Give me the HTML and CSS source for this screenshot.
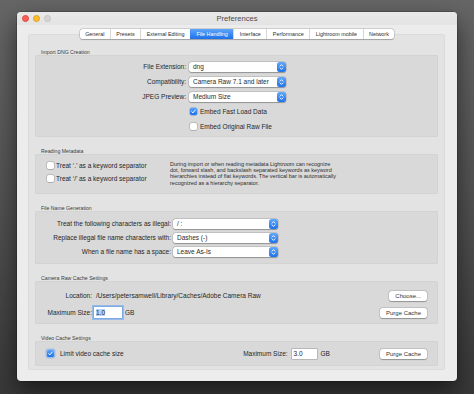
FILE: index.html
```html
<!DOCTYPE html>
<html lang="en">

<head>
    <meta charset="UTF-8">
    <meta name="viewport" content="width=device-width, initial-scale=1.0">
    <title>Preferences</title>
    <link rel="stylesheet" href="styles.css">
</head>

<body>
    <svg class="symbols" width="0" height="0">
        <symbol id="updown" viewBox="0 0 8 10">
            <path d="M2.6 4.1 L4 2.6 L5.4 4.1 M2.6 5.9 L4 7.4 L5.4 5.9" fill="none" stroke="#fff" stroke-width="0.9" stroke-linecap="round" stroke-linejoin="round"/>
        </symbol>
        <symbol id="tick" viewBox="0 0 8 8">
            <path d="M2 4.2 L3.3 5.6 L6 2.3" fill="none" stroke="#fff" stroke-width="1.1" stroke-linecap="round" stroke-linejoin="round"/>
        </symbol>
    </svg>

    <div class="window">
        <div class="titlebar">
            <div class="lights">
                <span class="light close"></span>
                <span class="light min"></span>
                <span class="light zoom"></span>
            </div>
            <div class="title">Preferences</div>
        </div>

        <div class="tabs">
            <span class="tab">General</span>
            <span class="tab">Presets</span>
            <span class="tab">External Editing</span>
            <span class="tab active">File Handling</span>
            <span class="tab">Interface</span>
            <span class="tab">Performance</span>
            <span class="tab">Lightroom mobile</span>
            <span class="tab">Network</span>
        </div>

        <div class="panel">
            <div class="group">
                <div class="group-title">Import DNG Creation</div>
                <div class="box dng">
                    <span class="field-label">File Extension:</span>
                    <div class="popup">dng<span class="stepper"><svg><use href="#updown"/></svg></span></div>
                    <span class="field-label">Compatibility:</span>
                    <div class="popup">Camera Raw 7.1 and later<span class="stepper"><svg><use href="#updown"/></svg></span></div>
                    <span class="field-label">JPEG Preview:</span>
                    <div class="popup">Medium Size<span class="stepper"><svg><use href="#updown"/></svg></span></div>
                    <div class="check-row in-grid"><span class="check on"><svg><use href="#tick"/></svg></span>Embed Fast Load Data</div>
                    <div class="check-row in-grid"><span class="check"></span>Embed Original Raw File</div>
                </div>
            </div>

            <div class="group">
                <div class="group-title">Reading Metadata</div>
                <div class="box metadata">
                    <div class="meta-checks">
                        <div class="check-row"><span class="check"></span>Treat ‘.’ as a keyword separator</div>
                        <div class="check-row"><span class="check"></span>Treat ‘/’ as a keyword separator</div>
                    </div>
                    <p class="meta-note">During import or when reading metadata Lightroom can recognize<br>dot, forward slash, and backslash separated keywords as keyword<br>hierarchies instead of flat keywords. The vertical bar is automatically<br>recognized as a hierarchy separator.</p>
                </div>
            </div>

            <div class="group">
                <div class="group-title">File Name Generation</div>
                <div class="box naming">
                    <span class="field-label">Treat the following characters as illegal:</span>
                    <div class="popup">/ :<span class="stepper"><svg><use href="#updown"/></svg></span></div>
                    <span class="field-label">Replace illegal file name characters with:</span>
                    <div class="popup">Dashes (-)<span class="stepper"><svg><use href="#updown"/></svg></span></div>
                    <span class="field-label">When a file name has a space:</span>
                    <div class="popup">Leave As-Is<span class="stepper"><svg><use href="#updown"/></svg></span></div>
                </div>
            </div>

            <div class="group">
                <div class="group-title">Camera Raw Cache Settings</div>
                <div class="box raw-cache">
                    <span class="field-label">Location:</span>
                    <span class="path">/Users/petersamwell/Library/Caches/Adobe Camera Raw</span>
                    <button class="btn">Choose...</button>
                    <span class="field-label">Maximum Size:</span>
                    <div class="size">
                        <span class="input focused"><span class="selected">1.0</span></span>
                        <span class="unit">GB</span>
                    </div>
                    <button class="btn">Purge Cache</button>
                </div>
            </div>

            <div class="group">
                <div class="group-title">Video Cache Settings</div>
                <div class="box video-cache">
                    <div class="check-row wide"><span class="check on ring"><svg><use href="#tick"/></svg></span>Limit video cache size</div>
                    <div class="size video-size">
                        <span class="field-label">Maximum Size:</span>
                        <span class="input small">3.0</span>
                        <span class="unit">GB</span>
                    </div>
                    <button class="btn purge">Purge Cache</button>
                </div>
            </div>
        </div>
    </div>
</body>

</html>
```

FILE: styles.css
```css
html,
body {
    height: 100%;
}

body {
    margin: 0;
    padding: 12px 0 0 17px;
    box-sizing: border-box;
    overflow: hidden;
    background: linear-gradient(#666666, #505050 55%, #383838);
    font-family: "Liberation Sans", Arial, sans-serif;
    color: #262626;
}

.symbols {
    position: absolute;
}

.window {
    width: 440px;
    height: 369px;
    display: flex;
    flex-direction: column;
    background: #ececec;
    border-radius: 4px;
    box-shadow: 0 0 0 0.5px rgba(0, 0, 0, 0.35), 0 10px 24px rgba(0, 0, 0, 0.55);
}

.titlebar {
    height: 13px;
    display: grid;
    grid-template-columns: 1fr auto 1fr;
    align-items: center;
    border-radius: 4px 4px 0 0;
    background: linear-gradient(#e9e9e9, #e3e3e3);
}

.lights {
    display: flex;
    gap: 4px;
    padding-left: 4.5px;
}

.light {
    width: 7px;
    height: 7px;
    border-radius: 50%;
    box-sizing: border-box;
}

.light.close {
    background: #fc5f57;
    border: 0.5px solid #df4744;
}

.light.min {
    background: #fdbc2e;
    border: 0.5px solid #dea123;
}

.light.zoom {
    background: #d4d4d4;
    border: 0.5px solid #c3c3c3;
}

.title {
    font-size: 7.6px;
    color: #4b4b4b;
}

/* tab strip sits over the top edge of the panel */
.tabs {
    position: relative;
    z-index: 1;
    align-self: center;
    display: flex;
    height: 10px;
    margin-top: 4px;
    background: #fff;
    border-radius: 2.5px;
    box-shadow: 0 0 0 0.5px rgba(0, 0, 0, 0.22), 0 0.5px 1px rgba(0, 0, 0, 0.2);
    overflow: hidden;
}

.tab {
    padding: 0 5.5px;
    font-size: 5.4px;
    line-height: 10px;
    color: #2e2e2e;
    border-left: 0.5px solid #d6d6d6;
}

.tab:first-child {
    border-left: none;
}

.tab.active {
    color: #fff;
    border-left-color: transparent;
    background: linear-gradient(#5ea6fb, #1d70ea);
}

.panel {
    flex: 1;
    margin: -5px 12px 11px 11px;
    padding: 15px 7px 0;
    background: #e3e3e3;
    border-radius: 3px;
    box-shadow: inset 0 0 0 0.5px rgba(0, 0, 0, 0.07);
}

.group + .group {
    margin-top: 11px;
}

.group-title {
    padding-left: 6px;
    font-size: 5.2px;
    line-height: 6px;
    color: #3c3c3c;
}

.box {
    box-sizing: border-box;
    background: #d9d9d9;
    border-radius: 2px;
    box-shadow: inset 0 0 0 0.5px rgba(0, 0, 0, 0.06);
}

.field-label {
    font-size: 6.5px;
    text-align: right;
    white-space: nowrap;
}

.popup {
    height: 10px;
    display: flex;
    align-items: center;
    justify-content: space-between;
    padding-left: 4px;
    font-size: 6.5px;
    color: #2b2b2b;
    background: #fff;
    border-radius: 2.5px;
    box-shadow: 0 0 0 0.5px rgba(0, 0, 0, 0.18), 0 0.5px 1px rgba(0, 0, 0, 0.25);
}

.stepper {
    width: 9px;
    height: 10px;
    display: flex;
    background: linear-gradient(#62a8fb, #1f72ea);
    border-radius: 2.5px;
}

.stepper svg {
    width: 9px;
    height: 10px;
}

.check-row {
    display: flex;
    align-items: center;
    gap: 3px;
    font-size: 6.5px;
    white-space: nowrap;
}

.check {
    width: 7px;
    height: 7px;
    flex: none;
    display: flex;
    background: #fff;
    border-radius: 1.5px;
    box-shadow: 0 0 0 0.5px rgba(0, 0, 0, 0.28), 0 0.5px 0.5px rgba(0, 0, 0, 0.15);
}

.check.on {
    background: linear-gradient(#5aa3fa, #1e71ea);
    box-shadow: 0 0 0 0.5px rgba(20, 90, 200, 0.5);
}

.check.ring {
    box-shadow: 0 0 0 1.5px rgba(110, 165, 240, 0.55);
}

.check svg {
    width: 7px;
    height: 7px;
}

/* Import DNG Creation */
.dng {
    height: 82px;
    display: grid;
    grid-template-columns: 151px 97px;
    grid-auto-rows: 11px;
    column-gap: 3px;
    row-gap: 4px;
    align-items: center;
    padding-top: 6px;
}

.check-row.in-grid {
    grid-column: 2;
    padding-left: 1px;
}

/* Reading Metadata */
.metadata {
    height: 40px;
    display: flex;
    padding: 6px 0 0 12px;
}

.meta-checks {
    width: 123px;
    display: flex;
    flex-direction: column;
    gap: 3px;
}

.meta-checks .check-row {
    height: 10px;
    gap: 2px;
}

.meta-note {
    margin: 1px 0 0;
    font-size: 5.5px;
    line-height: 6.2px;
    color: #2e2e2e;
    white-space: nowrap;
}

/* File Name Generation */
.naming {
    height: 53px;
    display: grid;
    grid-template-columns: 136px 105px;
    grid-auto-rows: 11px;
    column-gap: 2px;
    row-gap: 3px;
    align-items: center;
    padding-top: 7px;
}

/* Camera Raw Cache Settings */
.raw-cache {
    height: 43px;
    display: grid;
    grid-template-columns: 57px 1fr auto;
    grid-auto-rows: 11px;
    column-gap: 2px;
    row-gap: 6px;
    align-items: center;
    padding: 9px 11px 0 0;
}

.path {
    padding-left: 2px;
    font-size: 6.5px;
}

.raw-cache .btn {
    justify-self: end;
}

.size {
    display: flex;
    align-items: center;
    gap: 3px;
}

.input {
    width: 28px;
    height: 11px;
    box-sizing: border-box;
    display: flex;
    align-items: center;
    padding-left: 2px;
    font-size: 6.5px;
    background: #fff;
    box-shadow: 0 0 0 0.5px rgba(0, 0, 0, 0.3);
}

.input.focused {
    box-shadow: 0 0 0 0.5px #5f97e6, 0 0 0 2px rgba(110, 165, 240, 0.6);
}

.input .selected {
    background: #b4d3fb;
}

.input.small {
    width: 25px;
    height: 10px;
}

.unit {
    font-size: 6.5px;
}

.btn {
    height: 10px;
    padding: 0 6px;
    font-family: inherit;
    font-size: 6px;
    color: #333;
    background: #fff;
    border: none;
    border-radius: 2.5px;
    box-shadow: 0 0 0 0.5px rgba(0, 0, 0, 0.18), 0 0.5px 1px rgba(0, 0, 0, 0.25);
}

/* Video Cache Settings */
.video-cache {
    height: 25px;
    display: flex;
    align-items: center;
    padding: 0 11px 0 12px;
}

.check-row.wide {
    gap: 6px;
}

.video-size {
    margin-left: auto;
    gap: 4px;
}

.btn.purge {
    margin-left: 50px;
}
```
